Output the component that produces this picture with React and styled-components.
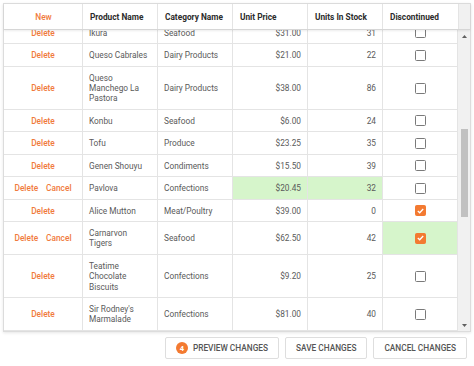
import styled, { createGlobalStyle } from "styled-components";

const GlobalStyle = createGlobalStyle`
    html, body {
        margin: 0;
        padding: 0;
        background: #ffffff;
        font-family: Roboto, "Liberation Sans", sans-serif;
    }
`

const produtos = [
    { nome: "Ikura", categoria: "Seafood", preco: "$31.00", estoque: 31, desc: false },
    { nome: "Queso Cabrales", categoria: "Dairy Products", preco: "$21.00", estoque: 22, desc: false },
    { nome: "Queso Manchego La Pastora", categoria: "Dairy Products", preco: "$38.00", estoque: 86, desc: false },
    { nome: "Konbu", categoria: "Seafood", preco: "$6.00", estoque: 24, desc: false },
    { nome: "Tofu", categoria: "Produce", preco: "$23.25", estoque: 35, desc: false },
    { nome: "Genen Shouyu", categoria: "Condiments", preco: "$15.50", estoque: 39, desc: false },
    { nome: "Pavlova", categoria: "Confections", preco: "$20.45", estoque: 32, desc: false, editado: ["preco", "estoque"] },
    { nome: "Alice Mutton", categoria: "Meat/Poultry", preco: "$39.00", estoque: 0, desc: true },
    { nome: "Carnarvon Tigers", categoria: "Seafood", preco: "$62.50", estoque: 42, desc: true, editado: ["desc"] },
    { nome: "Teatime Chocolate Biscuits", categoria: "Confections", preco: "$9.20", estoque: 25, desc: false },
    { nome: "Sir Rodney's Marmalade", categoria: "Confections", preco: "$81.00", estoque: 40, desc: false },
];

function Checkbox({ marcado }) {
    return (
        <Caixa $marcado={marcado}>
            {marcado && (
                <svg width="7" height="6" viewBox="0 0 7 6">
                    <path d="M0.8 3.1 L2.7 4.8 L6.2 1" fill="none" stroke="#fff" strokeWidth="1.3" />
                </svg>
            )}
        </Caixa>
    )
}

export default function App() {
    return (
        <Pagina>
            <GlobalStyle />
            <Grade>
                <Cabecalho>
                    <LinhaGrade>
                        <CelulaCabecalho $centro><Comando>New</Comando></CelulaCabecalho>
                        <CelulaCabecalho>Product Name</CelulaCabecalho>
                        <CelulaCabecalho>Category Name</CelulaCabecalho>
                        <CelulaCabecalho>Unit Price</CelulaCabecalho>
                        <CelulaCabecalho>Units In Stock</CelulaCabecalho>
                        <CelulaCabecalho $ultima>Discontinued</CelulaCabecalho>
                    </LinhaGrade>
                    <Calha />
                </Cabecalho>
                <Corpo>
                    <Visor>
                        {produtos.map((p) => {
                            const editado = p.editado || [];
                            return (
                                <LinhaGrade key={p.nome}>
                                    <Celula $alinha="center">
                                        <Comandos>
                                            <Comando>Delete</Comando>
                                            {p.editado && <Comando>Cancel</Comando>}
                                        </Comandos>
                                    </Celula>
                                    <Celula><span>{p.nome}</span></Celula>
                                    <Celula><span>{p.categoria}</span></Celula>
                                    <Celula $alinha="flex-end" $sujo={editado.includes("preco")}><span>{p.preco}</span></Celula>
                                    <Celula $alinha="flex-end" $sujo={editado.includes("estoque")}><span>{p.estoque}</span></Celula>
                                    <Celula $alinha="center" $sujo={editado.includes("desc")} $ultima>
                                        <Checkbox marcado={p.desc} />
                                    </Celula>
                                </LinhaGrade>
                            )
                        })}
                    </Visor>
                    <BarraRolagem>
                        <Seta>
                            <svg width="5" height="3" viewBox="0 0 5 3"><path d="M0 3 L2.5 0 L5 3 Z" fill="#606060" /></svg>
                        </Seta>
                        <Trilho>
                            <Polegar />
                        </Trilho>
                        <Seta>
                            <svg width="5" height="3" viewBox="0 0 5 3"><path d="M0 0 L2.5 3 L5 0 Z" fill="#606060" /></svg>
                        </Seta>
                    </BarraRolagem>
                </Corpo>
            </Grade>
            <Rodape>
                <Botao>
                    <Contador>4</Contador>
                    Preview Changes
                </Botao>
                <Botao>Save Changes</Botao>
                <Botao>Cancel Changes</Botao>
            </Rodape>
        </Pagina>
    )
}

const Pagina = styled.div`
    width: 474px;
    height: 366px;
    box-sizing: border-box;
    padding: 3px 0 0 3px;
    display: flex;
    flex-direction: column;
    font-size: 8.3px;
    line-height: 10.3px;
`
const Grade = styled.div`
    width: 468px;
    box-sizing: border-box;
    border: 1px solid #dcdcdc;
    box-shadow: 0 1px 3px rgba(0, 0, 0, 0.1);
    background: #fff;
    display: flex;
    flex-direction: column;
`
const Cabecalho = styled.div`
    display: flex;
    height: 26px;
    box-sizing: border-box;
    flex-shrink: 0;
    border-bottom: 1px solid #d6d6d6;
    box-shadow: 0 1px 2px rgba(0, 0, 0, 0.08);
    position: relative;
    z-index: 1;
`
const LinhaGrade = styled.div`
    width: 454px;
    display: grid;
    grid-template-columns: 79px repeat(5, 75px);
    flex-shrink: 0;
`
const CelulaCabecalho = styled.div`
    padding: 1px 6px 0 7px;
    font-weight: 700;
    color: #2b2b2b;
    border-right: ${(p) => (p.$ultima ? "none" : "1px solid #e4e4e4")};
    display: flex;
    align-items: center;
    justify-content: ${(p) => (p.$centro ? "center" : "flex-start")};
    white-space: nowrap;
`
const Calha = styled.div`
    width: 12px;
    background: #f1f1f1;
    border-left: 1px solid #e4e4e4;
`
const Corpo = styled.div`
    display: flex;
    height: 301px;
    flex-shrink: 0;
`
const Visor = styled.div`
    width: 454px;
    height: 301px;
    overflow: hidden;
    display: flex;
    flex-direction: column;
    justify-content: flex-end;
`
const Celula = styled.div`
    padding: 5.8px 6px 5.4px;
    color: #5a5a5a;
    background: ${(p) => (p.$sujo ? "#d6f5cb" : "transparent")};
    border-right: ${(p) => (p.$ultima ? "none" : "1px solid #e4e4e4")};
    border-bottom: 1px solid #e4e4e4;
    display: flex;
    align-items: center;
    justify-content: ${(p) => p.$alinha || "flex-start"};
    text-align: ${(p) => (p.$alinha === "flex-end" ? "right" : "left")};
`
const Comandos = styled.div`
    display: flex;
    gap: 8px;
`
const Comando = styled.span`
    color: #f07a3c;
    font-weight: 500;
`
const Caixa = styled.div`
    width: 11px;
    height: 11px;
    margin: -0.5px 0;
    box-sizing: border-box;
    border-radius: 1.5px;
    border: 1px solid ${(p) => (p.$marcado ? "#f37a31" : "#7a7a7a")};
    background: ${(p) => (p.$marcado ? "#f37a31" : "#fff")};
    display: flex;
    align-items: center;
    justify-content: center;
`
const BarraRolagem = styled.div`
    width: 12px;
    background: #f1f1f1;
    border-left: 1px solid #e4e4e4;
    display: flex;
    flex-direction: column;
`
const Seta = styled.div`
    height: 12px;
    display: flex;
    align-items: center;
    justify-content: center;
`
const Trilho = styled.div`
    flex: 1;
    display: flex;
    justify-content: center;
    padding-top: 87px;
`
const Polegar = styled.div`
    width: 7px;
    height: 88px;
    background: #c1c1c1;
`
const Rodape = styled.div`
    width: 464px;
    margin-top: 5px;
    display: flex;
    justify-content: flex-end;
    gap: 6px;
`
const Botao = styled.button`
    height: 22px;
    padding: 0 10px;
    border: 1px solid #dedede;
    border-radius: 2px;
    background: #fff;
    color: #555;
    font-family: Roboto, "Liberation Sans", sans-serif;
    font-size: 8.3px;
    font-weight: 500;
    text-transform: uppercase;
    display: flex;
    align-items: center;
    gap: 5px;
    cursor: pointer;
`
const Contador = styled.span`
    width: 12px;
    height: 12px;
    border-radius: 50%;
    background: #f37a31;
    color: #fff;
    font-size: 7.5px;
    font-weight: 700;
    display: flex;
    align-items: center;
    justify-content: center;
`
